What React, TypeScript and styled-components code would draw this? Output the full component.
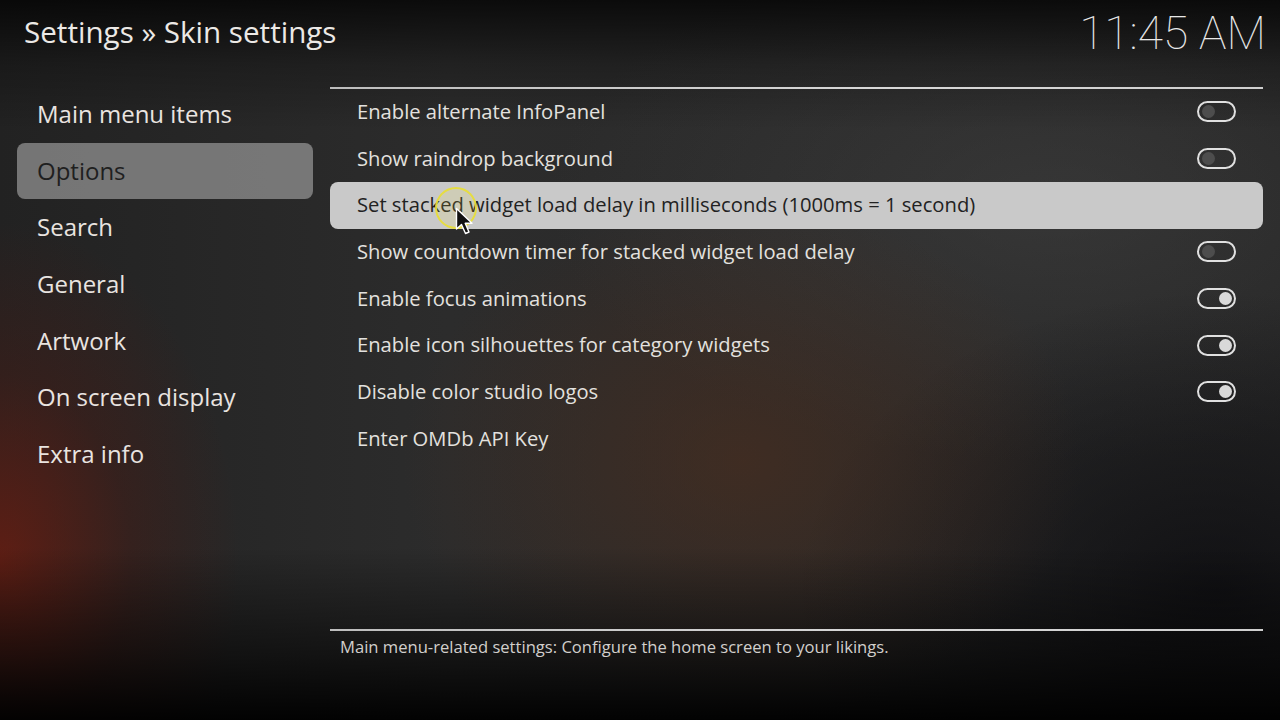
import React from "react";
import styled, { createGlobalStyle } from "styled-components";

const GlobalStyle = createGlobalStyle`
  html, body { margin: 0; padding: 0; background: #000; }
  body { font-family: "Open Sans", "Noto Sans", sans-serif; }
  * { box-sizing: border-box; }
`;

const Screen = styled.div`
  position: relative;
  width: 1280px;
  height: 720px;
  overflow: hidden;
  display: flex;
  flex-direction: column;
  color: #e6e3e0;
  background:
    linear-gradient(0deg, rgba(0, 0, 0, 0.95) 0%, rgba(0, 0, 0, 0.55) 9%, rgba(0, 0, 0, 0) 24%),
    linear-gradient(180deg, rgba(0, 0, 0, 0.75) 0%, rgba(0, 0, 0, 0.25) 9%, rgba(0, 0, 0, 0) 18%),
    radial-gradient(ellipse 240px 340px at 0% 78%, rgba(120, 28, 14, 0.7), rgba(90, 24, 14, 0.3) 55%, rgba(0, 0, 0, 0) 100%),
    radial-gradient(ellipse 340px 260px at 58% 64%, rgba(80, 46, 28, 0.55), rgba(0, 0, 0, 0) 100%),
    radial-gradient(ellipse 420px 300px at 95% 82%, rgba(8, 8, 12, 0.7), rgba(0, 0, 0, 0) 100%),
    radial-gradient(ellipse 500px 260px at 82% 28%, rgba(72, 72, 72, 0.45), rgba(0, 0, 0, 0) 100%),
    linear-gradient(90deg, #222 0%, #2c2c2c 35%, #2a2a2a 60%, #262626 100%);
`;

const Header = styled.header`
  height: 86px;
  display: flex;
  justify-content: space-between;
  align-items: flex-start;
  padding: 0 14px 0 24px;
`;

const Title = styled.h1`
  margin: 12px 0 0;
  font-size: 29.6px;
  font-weight: 400;
  color: #ece9e6;
  line-height: 40px;
`;

const Clock = styled.div`
  margin-top: 5px;
  font-family: "Roboto", "Lato", sans-serif;
  font-weight: 100;
  font-size: 46px;
  line-height: 56px;
  color: #e8e8e8;
`;

const Body = styled.div`
  flex: 1;
  display: flex;
  gap: 17px;
  padding: 0 17px;
`;

const Sidebar = styled.nav`
  width: 296px;
  display: flex;
  flex-direction: column;
`;

const MenuItem = styled.div<{ $active?: boolean }>`
  height: 56.7px;
  display: flex;
  align-items: center;
  padding: 0 0 2px 20px;
  font-size: 24px;
  border-radius: 8px;
  color: ${(p) => (p.$active ? "#1f1f1f" : "#e9e4e0")};
  background: ${(p) => (p.$active ? "rgba(150, 150, 150, 0.72)" : "transparent")};
`;

const Main = styled.main`
  flex: 1;
  display: flex;
  flex-direction: column;
  padding-top: 1px;
  padding-bottom: 61px;
`;

const Rule = styled.div`
  height: 2px;
  background: linear-gradient(90deg, #bdbdbd, #d8d8d8 60%, #cfcfcf);
  flex-shrink: 0;
`;

const List = styled.div`
  display: flex;
  flex-direction: column;
`;

const Row = styled.div<{ $active?: boolean }>`
  height: 46.7px;
  display: flex;
  align-items: center;
  justify-content: space-between;
  padding: 0 27px 3px;
  font-size: 20.2px;
  border-radius: 8px;
  color: ${(p) => (p.$active ? "#222" : "#e3e1df")};
  background: ${(p) => (p.$active ? "#c9c9c9" : "transparent")};
`;

const Toggle = styled.span<{ $on: boolean }>`
  position: relative;
  width: 39px;
  height: 21px;
  margin-top: 2px;
  border: 2px solid #e0e0e0;
  border-radius: 11px;
  flex-shrink: 0;
  &::after {
    content: "";
    position: absolute;
    top: 2px;
    left: ${(p) => (p.$on ? "20px" : "3px")};
    width: 13px;
    height: 13px;
    border-radius: 50%;
    background: ${(p) => (p.$on ? "#d9d9d9" : "#4d4d4d")};
  }
`;

const Spacer = styled.div`
  flex: 1;
`;

const Footer = styled.div`
  display: flex;
  flex-direction: column;
`;

const Description = styled.p`
  margin: 0;
  padding: 4px 10px 0;
  font-size: 16.6px;
  line-height: 24px;
  color: #d2cfcc;
`;

const Pointer = styled.div`
  position: absolute;
  left: 435px;
  top: 187px;
  width: 42px;
  height: 42px;
  border-radius: 50%;
  border: 2.5px solid rgba(232, 222, 50, 0.9);
  background: rgba(240, 230, 80, 0.14);
  pointer-events: none;
`;

const Arrow = styled.svg`
  position: absolute;
  left: 455px;
  top: 207px;
  width: 20px;
  height: 30px;
  pointer-events: none;
`;

type Setting = { label: string; toggle?: boolean; on?: boolean };

const menu = [
  "Main menu items",
  "Options",
  "Search",
  "General",
  "Artwork",
  "On screen display",
  "Extra info",
];

const settings: Setting[] = [
  { label: "Enable alternate InfoPanel", toggle: true, on: false },
  { label: "Show raindrop background", toggle: true, on: false },
  { label: "Set stacked widget load delay in milliseconds (1000ms = 1 second)" },
  { label: "Show countdown timer for stacked widget load delay", toggle: true, on: false },
  { label: "Enable focus animations", toggle: true, on: true },
  { label: "Enable icon silhouettes for category widgets", toggle: true, on: true },
  { label: "Disable color studio logos", toggle: true, on: true },
  { label: "Enter OMDb API Key" },
];

export default function App() {
  return (
    <>
      <GlobalStyle />
      <Screen>
        <Header>
          <Title>Settings » Skin settings</Title>
          <Clock>11:45 AM</Clock>
        </Header>
        <Body>
          <Sidebar>
            {menu.map((m) => (
              <MenuItem key={m} $active={m === "Options"}>
                {m}
              </MenuItem>
            ))}
          </Sidebar>
          <Main>
            <Rule />
            <List>
              {settings.map((s, i) => (
                <Row key={s.label} $active={i === 2}>
                  <span>{s.label}</span>
                  {s.toggle && <Toggle $on={!!s.on} />}
                </Row>
              ))}
            </List>
            <Spacer />
            <Footer>
              <Rule />
              <Description>
                Main menu-related settings: Configure the home screen to your likings.
              </Description>
            </Footer>
          </Main>
        </Body>
        <Pointer />
        <Arrow viewBox="0 0 20 30">
          <path
            d="M1.5 1.5 L1.5 22 L6.5 17.5 L10.5 26.5 L14 25 L10.2 16.3 L17 16.3 Z"
            fill="#111"
            stroke="#fff"
            strokeWidth="1.4"
            strokeLinejoin="round"
          />
        </Arrow>
      </Screen>
    </>
  );
}
